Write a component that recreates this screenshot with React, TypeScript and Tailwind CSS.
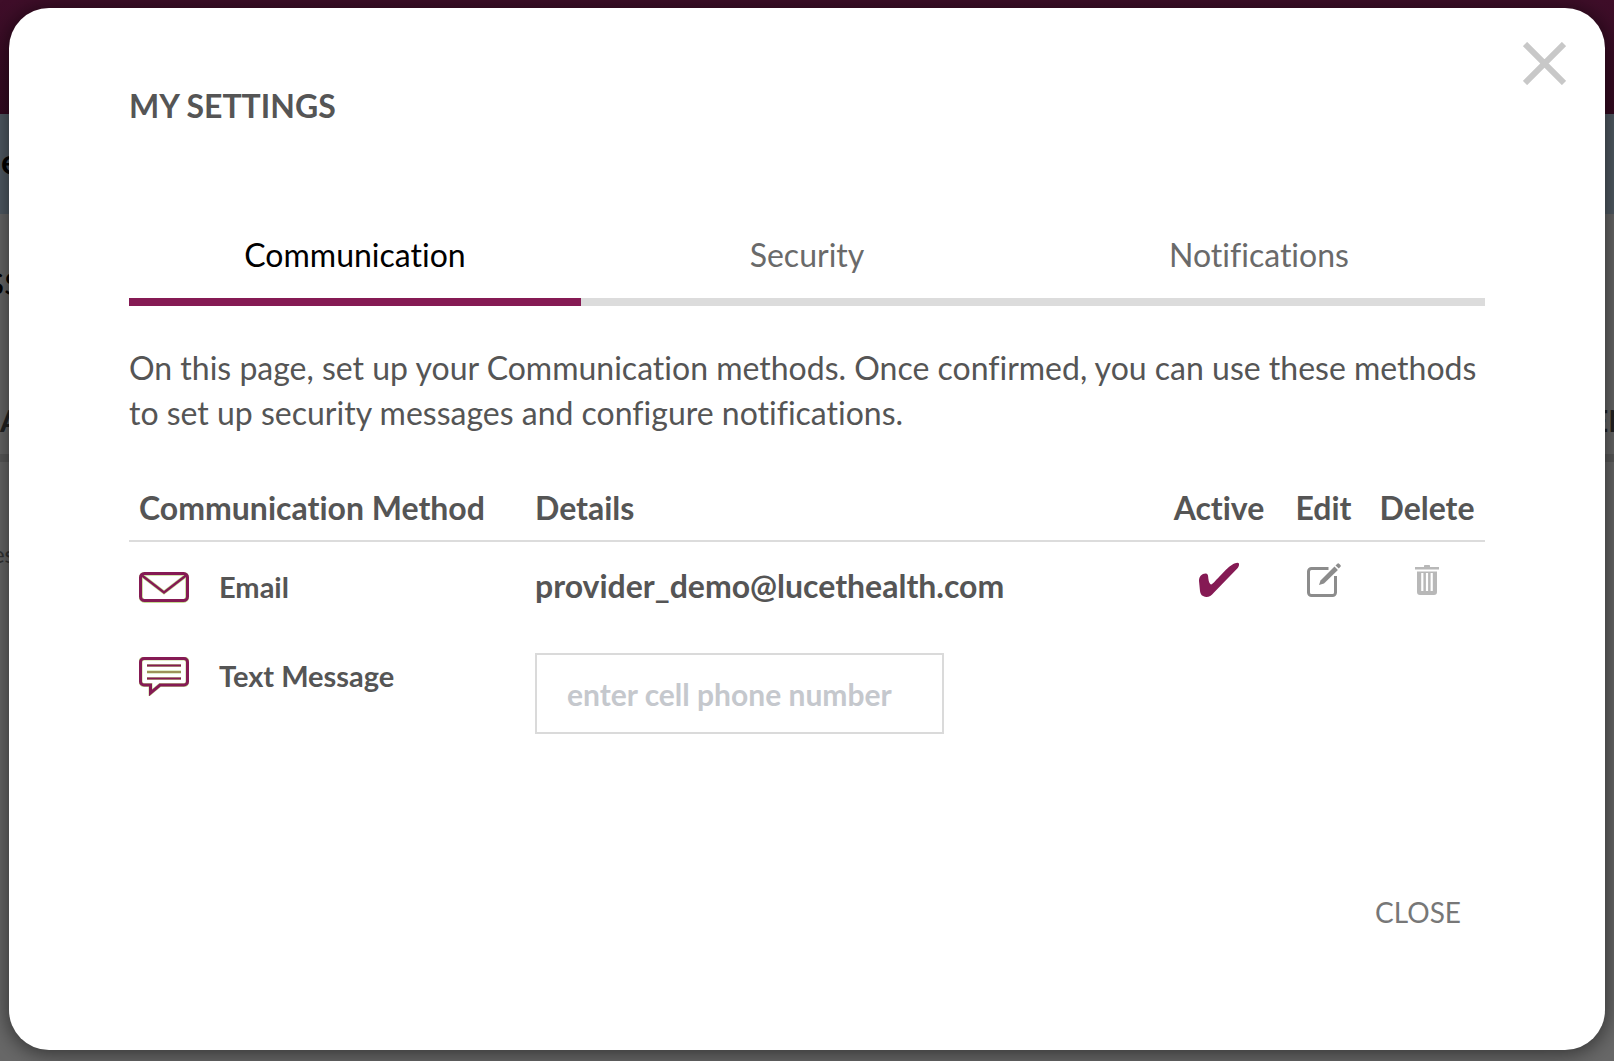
import { useState } from "react";

const tabs = ["Communication", "Security", "Notifications"];

function MailIcon() {
  return (
    <svg className="h-[31px] w-[50px] shrink-0" viewBox="0 0 50 31" fill="none">
      <rect x="1.8" y="1.8" width="46.4" height="27.2" rx="4" stroke="#c3dc92" strokeWidth="4" />
      <path d="M3 3.5 25 20.5 47 3.5" stroke="#c3dc92" strokeWidth="3.6" />
      <rect x="1.5" y="1.5" width="47" height="27" rx="4" stroke="#851a54" strokeWidth="3" />
      <path d="M3 3.5 25 20.5 47 3.5" stroke="#851a54" strokeWidth="2.4" />
    </svg>
  );
}

function MessageIcon() {
  const bubble =
    "M5 1.5h40a3.5 3.5 0 0 1 3.5 3.5v19.5a3.5 3.5 0 0 1-3.5 3.5H21l-9.5 8V28H5a3.5 3.5 0 0 1-3.5-3.5V5A3.5 3.5 0 0 1 5 1.5Z";
  return (
    <svg className="h-[39px] w-[50px] shrink-0" viewBox="0 0 50 39" fill="none">
      <path d={bubble} stroke="#c3dc92" strokeWidth="4" />
      <path d="M8 8.5h34M8 15h34M8 21.5h34" stroke="#c3dc92" strokeWidth="2.8" />
      <path d={bubble} stroke="#851a54" strokeWidth="3" />
      <path d="M8 8.5h34M8 21.5h34" stroke="#851a54" strokeWidth="1.8" />
      <path d="M8 15h34" stroke="#8f7a45" strokeWidth="1.6" />
    </svg>
  );
}

function CheckIcon() {
  return (
    <svg className="h-9 w-10" viewBox="0 0 40 36" role="img" aria-label="Active">
      <path
        d="M0 19C0 14 3 12 6.5 11.6C8.5 11.5 9 13 9.2 15C9.5 18 10 21.5 12 22.5C14 22 17 18 20 15C25 10 29 5 33.5 2.5C36 .8 39 0 39.8 1.2C40.5 3 39.5 5 38 6.8L15 30.5C12.5 33.5 10 35 7.5 35C3 34.5 1.500 32.500 1 29Z"
        fill="#851a54"
      />
    </svg>
  );
}

function EditIcon() {
  return (
    <svg className="h-[34px] w-[34px]" viewBox="0 0 34 34" fill="none">
      <path d="M21.5 5.5H4.5a3 3 0 0 0-3 3v21a3 3 0 0 0 3 3h21a3 3 0 0 0 3-3V13" stroke="#8c8c8c" strokeWidth="3" />
      <path d="M12 22l1.5-4.5L27.5 3.5l3.4 3.4L17 20.5Z" fill="#8c8c8c" />
      <path d="M28.5 2.5 30.3.7q.9-.8 1.8 0l1.3 1.3q.8.9 0 1.8L31.8 5.6Z" fill="#8c8c8c" />
    </svg>
  );
}

function TrashIcon() {
  return (
    <svg className="h-[30px] w-6" viewBox="0 0 24 30" fill="#b8b8b8">
      <path d="M0 2h9V.8q0-.8.8-.8h4.4q.8 0 .8.8V2h9v2.5H0Z" />
      <path fillRule="evenodd" d="M2 6.5h20V27q0 3-3 3H5q-3 0-3-3ZM6.2 8v18h2.2V8Zm4.7 0v18h2.2V8Zm4.7 0v18h2.2V8Z" />
    </svg>
  );
}

function Backdrop() {
  return (
    <div aria-hidden="true" className="absolute inset-0 flex flex-col overflow-hidden bg-[#686868] text-black">
      <div className="h-[114px] bg-linear-to-b from-[#3f0e29] to-[#340a21]" />
      <div className="flex h-[100px] bg-[#515b64] pl-px">
        <p className="pt-[25px] text-[34px] leading-[44px] font-bold">e</p>
      </div>
      <div className="flex w-[21px] justify-end pt-[45px] text-[31px] leading-[48px]">SS</div>
      <div className="flex h-[155px] items-end justify-between border-b-8 border-[#5a5a5a] pb-[10px] text-[30px] leading-[48px] font-bold text-[#222]">
        <span>A</span>
        <span className="w-[23px]">EN</span>
      </div>
      <div className="flex w-[15px] justify-end pt-[68px] text-[24px] leading-[48px] text-[#333]">es</div>
    </div>
  );
}

export default function App() {
  const [active, setActive] = useState(0);
  return (
    <div className="relative flex min-h-screen px-[9px] pt-2 pb-[11px] font-['Lato',sans-serif] text-[#555] [font-variant-ligatures:no-common-ligatures]">
      <Backdrop />
      <div
        role="dialog"
        aria-labelledby="title"
        className="relative flex grow flex-col rounded-[40px] bg-white px-[120px] pt-[74px] shadow-[0_2px_20px_2px_rgba(0,0,0,0.5)]"
      >
        <button aria-label="Close dialog" className="absolute top-[34px] right-[39px]">
          <svg className="size-[43px]" viewBox="0 0 43 43" stroke="#c8c8c8" strokeWidth="6">
            <path d="M2 2 41 41M41 2 2 41" />
          </svg>
        </button>
        <h1 id="title" className="text-[32px] leading-[48px] font-bold">MY SETTINGS</h1>
        <div role="tablist" className="mt-[101px] grid grid-cols-3">
          {tabs.map((tab, i) => (
            <button
              key={tab}
              role="tab"
              aria-selected={i === active}
              onClick={() => setActive(i)}
              className={
                i === active
                  ? "border-b-8 border-[#851a54] pb-[19px] text-[32px] leading-[48px] text-black"
                  : "border-b-8 border-[#dcdcdc] pb-[19px] text-[32px] leading-[48px] text-[#6a6a6a]"
              }
            >
              {tab}
            </button>
          ))}
        </div>
        <p className="mt-[39px] text-[32px] leading-[45px]">
          On this page, set up your Communication methods. Once confirmed, you can use these methods to set up security
          messages and configure notifications.
        </p>
        <table className="mt-[49px] w-full table-fixed text-left font-bold">
          <colgroup>
            <col className="w-[396px]" />
            <col />
            <col className="w-[118px]" />
            <col className="w-[91px]" />
            <col className="w-[116px]" />
          </colgroup>
          <thead>
            <tr className="border-b-2 border-[#dcdcdc] text-[32px] leading-[48px]">
              <th scope="col" className="px-[10px] pb-2">Communication Method</th>
              <th scope="col" className="px-[10px] pb-2">Details</th>
              <th scope="col" className="pb-2 text-center">Active</th>
              <th scope="col" className="pb-2 text-center">Edit</th>
              <th scope="col" className="pb-2 text-center">Delete</th>
            </tr>
          </thead>
          <tbody>
            <tr className="h-[95px]">
              <th scope="row" className="px-[10px] pb-1 text-[29px] leading-[48px]">
                <span className="flex items-center gap-[30px]"><MailIcon />Email</span>
              </th>
              <td className="px-[10px] pb-[6px] text-[32px] leading-[48px]">provider_demo@lucethealth.com</td>
              <td className="pb-[18px]"><span className="flex justify-center"><CheckIcon /></span></td>
              <td className="pb-[18px]"><button aria-label="Edit email" className="mx-auto block"><EditIcon /></button></td>
              <td className="pb-[18px]"><button aria-label="Delete email" className="mx-auto block"><TrashIcon /></button></td>
            </tr>
            <tr className="align-top">
              <th scope="row" className="px-[10px] pt-4 text-[29px] leading-[48px]">
                <label htmlFor="phone" className="flex items-center gap-[30px]"><MessageIcon />Text Message</label>
              </th>
              <td className="px-[10px] pt-[17px]">
                <input
                  id="phone"
                  type="tel"
                  placeholder="enter cell phone number"
                  className="h-[81px] w-[409px] border-2 border-[#dadada] px-[30px] text-[30px] font-bold placeholder:text-[#c5c8cd]"
                />
              </td>
            </tr>
          </tbody>
        </table>
        <button className="mt-[154px] mr-6 self-end text-[28px] leading-[48px] text-[#777]">CLOSE</button>
      </div>
    </div>
  );
}
